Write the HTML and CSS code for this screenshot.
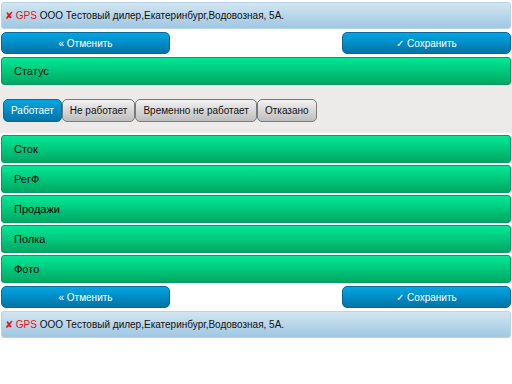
FILE: index.html
```html
<!DOCTYPE html>
<html>
<head>
    <title>Визит</title>
    <link rel="stylesheet" href="styles.css">
</head>
<body>

<div class="page">
    <div class="info-bar">
        <span class="gps">&#10008; GPS</span> ООО Тестовый дилер,Екатеринбург,Водовозная, 5А.
    </div>

    <div class="actions">
        <button class="action-btn">« Отменить</button>
        <div></div>
        <button class="action-btn">✓ Сохранить</button>
    </div>

    <div class="section">Статус</div>
    <div class="status-box">
        <div class="segments">
            <button class="seg active">Работает</button>
            <button class="seg">Не работает</button>
            <button class="seg">Временно не работает</button>
            <button class="seg">Отказано</button>
        </div>
    </div>

    <div class="section">Сток</div>
    <div class="section">РегФ</div>
    <div class="section">Продажи</div>
    <div class="section">Полка</div>
    <div class="section">Фото</div>

    <div class="actions">
        <button class="action-btn">« Отменить</button>
        <div></div>
        <button class="action-btn">✓ Сохранить</button>
    </div>

    <div class="info-bar">
        <span class="gps">&#10008; GPS</span> ООО Тестовый дилер,Екатеринбург,Водовозная, 5А.
    </div>
</div>

</body>
</html>
```

FILE: styles.css
```css
body {
    font-family: "Liberation Sans", Arial, sans-serif;
    font-size: 11px;
    background-color: #ffffff;
    color: #000;
    margin: 0;
    padding: 0;
}
.page {
    padding: 2px 1px 0 1px;
}
.info-bar {
    height: 25px;
    line-height: 25px;
    padding-left: 3px;
    font-size: 10px;
    background: linear-gradient(#d2e5f0, #9fc7e3);
    border: 1px solid #b7d4e8;
    border-radius: 3px;
    color: #111;
    white-space: nowrap;
}
.gps {
    color: #ee1111;
}
.actions {
    display: grid;
    grid-template-columns: 169px 1fr 169px;
    margin: 3px 0;
}
.action-btn {
    height: 22px;
    font-family: inherit;
    font-size: 10px;
    color: #ffffff;
    background: linear-gradient(#01a6e4, #0273a6);
    border: 1px solid #0a6a98;
    border-radius: 5px;
    padding: 0;
}
.section {
    height: 26px;
    line-height: 26px;
    padding-left: 12px;
    margin-bottom: 2px;
    background: linear-gradient(#00e896, #00a862);
    border: 1px solid #0b9a66;
    border-radius: 3px;
}
.status-box {
    background-color: #ecebe9;
    margin: -1px -1px 2px -1px;
    padding: 13px 2px 11px 3px;
}
.segments {
    display: flex;
}
.seg {
    height: 23px;
    padding: 0 7px;
    font-family: inherit;
    font-size: 10px;
    color: #111;
    background: linear-gradient(#f2f2f2, #bdbdbd);
    border: 1px solid #7a7a7a;
    border-radius: 5px;
}
.seg.active {
    color: #ffffff;
    background: linear-gradient(#01a6e4, #0273a6);
    border-color: #0a6a98;
}
```
